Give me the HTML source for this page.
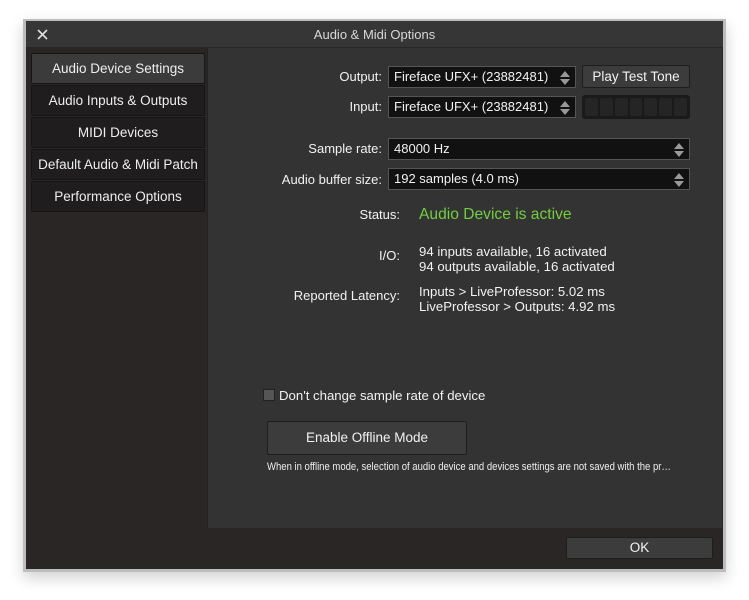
<!DOCTYPE html>
<html><head><style>
*{margin:0;padding:0;box-sizing:border-box}
body{width:749px;height:600px;background:#fff;font-family:"Liberation Sans",sans-serif;position:relative;overflow:hidden;color:#fff}
.a{position:absolute}
.win{left:23px;top:19px;width:703px;height:553px;background:#bdbdbd;box-shadow:0 6px 14px rgba(0,0,0,.18)}
.inner{left:26px;top:21px;width:697px;height:548px;background:#2a2625}
.title{left:26px;top:21px;width:697px;height:27px;background:#363636;border-bottom:1px solid #262626;font-size:13px;color:#d8d8d8;text-align:center;line-height:27px}
.main{left:207px;top:48px;width:515px;height:480px;background:#333333;border-left:1px solid #222}
.side{left:31px;width:174px;height:31px;background:#1f1d1d;border:1px solid #151515;border-radius:2px;font-size:13.5px;text-align:center;line-height:29px;color:#eee}
.sel{background:#3b3b3b}
.lbl{font-size:13px;text-align:right;color:#f2f2f2}
.box{background:#111;border:1px solid #555;font-size:13px;padding-left:5px;line-height:20px;color:#f2f2f2}
.arr{position:absolute;right:5px;top:3px;width:10px;height:16px}
.btn{background:#3c3c3c;border:1px solid #1d1d1d;border-radius:2px;font-size:13.5px;text-align:center;color:#f2f2f2}
.val{font-size:13.2px;color:#f2f2f2;line-height:15px}
</style></head><body>
<div class="a win"></div>
<div class="a inner"></div>
<div class="a title">Audio &amp; Midi Options</div>
<svg class="a" style="left:37px;top:29px" width="11" height="11"><path d="M1 1L10 10M10 1L1 10" stroke="#e0e0e0" stroke-width="1.6"/></svg>
<div class="a main"></div>
<div class="a side sel" style="top:53px">Audio Device Settings</div>
<div class="a side" style="top:85px">Audio Inputs &amp; Outputs</div>
<div class="a side" style="top:117px">MIDI Devices</div>
<div class="a side" style="top:149px">Default Audio &amp; Midi Patch</div>
<div class="a side" style="top:181px">Performance Options</div>

<div class="a lbl" style="left:250px;width:132px;top:69px">Output:</div>
<div class="a lbl" style="left:250px;width:132px;top:99px">Input:</div>
<div class="a lbl" style="left:250px;width:132px;top:141px">Sample rate:</div>
<div class="a lbl" style="left:250px;width:132px;top:172px">Audio buffer size:</div>

<div class="a box" style="left:388px;top:66px;width:188px;height:22px">Fireface UFX+ (23882481)<svg class="arr" viewBox="0 0 10 16"><path d="M5 1L10 7H0Z M0 9H10L5 15Z" fill="#999"/></svg></div>
<div class="a box" style="left:388px;top:96px;width:188px;height:22px">Fireface UFX+ (23882481)<svg class="arr" viewBox="0 0 10 16"><path d="M5 1L10 7H0Z M0 9H10L5 15Z" fill="#999"/></svg></div>
<div class="a box" style="left:388px;top:138px;width:302px;height:22px">48000 Hz<svg class="arr" viewBox="0 0 10 16"><path d="M5 1L10 7H0Z M0 9H10L5 15Z" fill="#999"/></svg></div>
<div class="a box" style="left:388px;top:168px;width:302px;height:22px">192 samples (4.0 ms)<svg class="arr" viewBox="0 0 10 16"><path d="M5 1L10 7H0Z M0 9H10L5 15Z" fill="#999"/></svg></div>

<div class="a btn" style="left:582px;top:65px;width:108px;height:23px;line-height:21px">Play Test Tone</div>
<div class="a" style="left:582px;top:95px;width:108px;height:24px;background:#1a1a1a;border-radius:3px;display:flex;gap:2px;padding:3px">
<div style="flex:1;background:#252525;border-radius:2px"></div><div style="flex:1;background:#252525;border-radius:2px"></div><div style="flex:1;background:#252525;border-radius:2px"></div><div style="flex:1;background:#252525;border-radius:2px"></div><div style="flex:1;background:#252525;border-radius:2px"></div><div style="flex:1;background:#252525;border-radius:2px"></div><div style="flex:1;background:#252525;border-radius:2px"></div>
</div>

<div class="a lbl" style="left:250px;width:150px;top:207px">Status:</div>
<div class="a" style="left:419px;top:206px;font-size:15.6px;color:#72cf3f">Audio Device is active</div>
<div class="a lbl" style="left:250px;width:150px;top:248px">I/O:</div>
<div class="a val" style="left:419px;top:244px">94 inputs available, 16 activated<br>94 outputs available, 16 activated</div>
<div class="a lbl" style="left:250px;width:150px;top:288px">Reported Latency:</div>
<div class="a val" style="left:419px;top:284px">Inputs &gt; LiveProfessor: 5.02 ms<br>LiveProfessor &gt; Outputs: 4.92 ms</div>

<div class="a" style="left:263px;top:389px;width:12px;height:12px;background:#555;border:1px solid #222"></div>
<div class="a" style="left:279px;top:388px;font-size:13.2px;color:#f2f2f2">Don't change sample rate of device</div>
<div class="a btn" style="left:267px;top:421px;width:200px;height:34px;line-height:32px">Enable Offline Mode</div>
<div class="a" style="left:267px;top:461px;font-size:11px;color:#eee;transform:scaleX(0.865);transform-origin:left;white-space:nowrap">When in offline mode, selection of audio device and devices settings are not saved with the pr…</div>

<div class="a btn" style="left:566px;top:537px;width:147px;height:22px;line-height:20px">OK</div>
</body></html>
